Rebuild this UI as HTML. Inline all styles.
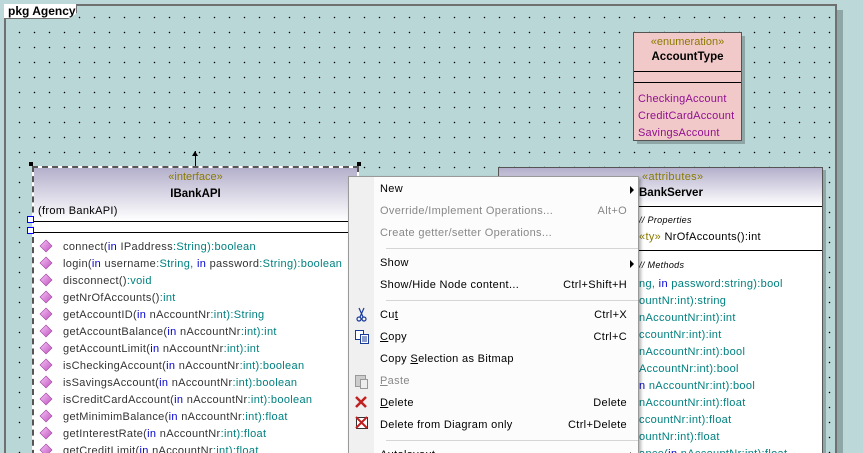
<!DOCTYPE html><html><head><style>
*{margin:0;padding:0;box-sizing:border-box}
html,body{width:863px;height:453px;overflow:hidden}
body{background:#bcd8d8;font-family:"Liberation Sans",sans-serif;font-size:11px;letter-spacing:.33px}
#w{position:relative;width:863px;height:453px;overflow:hidden}
.pkg{position:absolute;left:4px;top:4px;width:833px;height:460px;border:2px solid #707070;background-color:#bad7d7;background-image:radial-gradient(circle,#000 0.6px,transparent 0.9px);background-size:15px 15px;background-position:6px 4px}
.pshadow{position:absolute;left:837px;top:10px;width:6px;height:460px;background:#8fa6a6}
.tab{position:absolute;left:4px;top:4px;width:73px;height:15px;background:#fff;border-right:1px solid #707070;border-bottom:1px solid #707070;font-weight:bold;font-size:12px;letter-spacing:0;padding-left:4px;line-height:14px;clip-path:polygon(0 0,100% 0,100% 60%,88% 100%,0 100%)}
.abs{position:absolute}
.box{position:absolute;background:#fff}
.st{color:#8a7a00;text-align:center}
.nm{font-weight:bold;text-align:center;font-size:11.5px;letter-spacing:0}
.k{color:#0000d0}.t{color:#008080}
.menu{position:absolute;left:348px;top:176px;width:291px;height:290px;background:#fcfcfc;border:1px solid #999;box-shadow:2px 2px 3px rgba(0,0,0,.3)}
.gut{position:absolute;left:0;top:0;width:25px;height:100%;background:#f0f0f0}
.mi{position:absolute;left:31px;white-space:nowrap;font-size:11px;color:#000}
.sc{position:absolute;right:11px;white-space:nowrap;font-size:11px}
.dis{color:#888}
.sep{position:absolute;left:37px;right:0;height:1px;background:#d5d5d5}
.arr{position:absolute;right:4px;width:0;height:0;border-top:4px solid transparent;border-bottom:4px solid transparent;border-left:4px solid #000}
u{text-decoration:underline}
</style></head><body><div id="w">
<div class="pkg"></div><div class="pshadow"></div>
<div class="tab">pkg Agency</div>

<div class="abs" style="left:637px;top:36px;width:108px;height:108px;background:#8fa6a6"></div>
<div class="box" style="left:633px;top:32px;width:109px;height:109px;background:#f2c9c9;border:1px solid #555">
<div class="st" style="margin-top:3px;font-size:11px;letter-spacing:0">«enumeration»</div>
<div class="nm" style="margin-top:3px">AccountType</div>
<div class="abs" style="left:0;right:0;top:38px;height:1px;background:#000"></div>
<div class="abs" style="left:0;right:0;top:49px;height:1px;background:#000"></div>
<div class="abs" style="left:4px;top:58px;color:#901090;line-height:17px;letter-spacing:.2px">CheckingAccount<br>CreditCardAccount<br>SavingsAccount</div>
</div>

<div class="abs" style="left:822px;top:170px;width:4px;height:300px;background:#8fa6a6"></div>
<div class="box" style="left:498px;top:167px;width:325px;height:300px;border:1px solid #555">
<div class="abs" style="left:0;right:0;top:0;height:38px;background:linear-gradient(#b4b0cc,#fff)"></div>
<div class="abs" style="left:0;right:0;top:38px;height:1px;background:#000"></div>
<div class="abs" style="left:0;right:0;top:82px;height:1px;background:#000"></div>
<div class="abs" style="left:143px;top:3px"><span style="color:#8a7a00">«attributes»</span></div>
<div class="abs nm" style="left:140px;top:19px">BankServer</div>
<div class="abs" style="left:140px;top:47px;font-style:italic;font-size:9px">// Properties</div>
<div class="abs" style="left:140px;top:63px"><span style="color:#8a7a00">«ty»</span> NrOfAccounts():int</div>
<div class="abs" style="left:140px;top:92px;font-style:italic;font-size:9px">// Methods</div>
<div class="abs t" style="left:140px;top:108px;line-height:17px;white-space:nowrap">ng, <span class="k">in</span> password:string):bool<br>ountNr:int):string<br>nAccountNr:int):int<br>ccountNr:int):int<br>nAccountNr:int):bool<br>AccountNr:int):bool<br><span class="k">n</span> nAccountNr:int):bool<br>nAccountNr:int):float<br>ccountNr:int):float<br>ountNr:int):float<br>ance(<span class="k">in</span> nAccountNr:int):float</div>
</div>

<div class="abs" style="left:195px;top:151px;width:1px;height:16px;background:#000"></div>
<div class="abs" style="left:192px;top:151px;width:0;height:0;border-left:3px solid transparent;border-right:3px solid transparent;border-bottom:5px solid #000"></div>
<div class="box" style="left:32px;top:166px;width:327px;height:300px;border:2px dashed #555">
<div class="abs" style="left:0;right:0;top:0;height:53px;background:linear-gradient(#b4b0cc,#fff)"></div>
<div class="abs" style="left:0;right:0;top:53px;height:1px;background:#000"></div>
<div class="abs" style="left:0;right:0;top:64px;height:1px;background:#000"></div>
<div class="abs st" style="left:0;right:0;top:3px;letter-spacing:0">«interface»</div>
<div class="abs nm" style="left:0;right:0;top:20px">IBankAPI</div>
<div class="abs" style="left:4px;top:37px">(from BankAPI)</div>
</div>
<div class="abs" style="left:27px;top:216px;width:7px;height:7px;border:1px solid #00f;background:#fff"></div>
<div class="abs" style="left:27px;top:227px;width:7px;height:7px;border:1px solid #00f;background:#fff"></div>
<div class="abs" style="left:29px;top:162px;width:4px;height:4px;background:#000"></div>
<div class="abs" style="left:357px;top:162px;width:4px;height:4px;background:#000"></div>
<div class="abs" style="left:34px;top:238px;width:320px;height:215px;font-size:11px">
<svg style="position:absolute;left:5px;top:0" width="14" height="215">
<defs><linearGradient id="g" x1="0" y1="0" x2="1" y2="1"><stop offset="0" stop-color="#f6c8f6"/><stop offset="1" stop-color="#c050c0"/></linearGradient></defs>
<g fill="url(#g)" stroke="#a040a0" stroke-width="0.6">
<path d="M7 2L13 8L7 14L1 8Z"/><path d="M7 19L13 25L7 31L1 25Z"/><path d="M7 36L13 42L7 48L1 42Z"/><path d="M7 53L13 59L7 65L1 59Z"/><path d="M7 70L13 76L7 82L1 76Z"/><path d="M7 87L13 93L7 99L1 93Z"/><path d="M7 104L13 110L7 116L1 110Z"/><path d="M7 121L13 127L7 133L1 127Z"/><path d="M7 138L13 144L7 150L1 144Z"/><path d="M7 155L13 161L7 167L1 161Z"/><path d="M7 172L13 178L7 184L1 178Z"/><path d="M7 189L13 195L7 201L1 195Z"/><path d="M7 206L13 212L7 218L1 212Z"/></g></svg>
<div class="abs" style="left:29px;top:1px;line-height:17px;white-space:nowrap;color:#333">
connect(<span class="k">in</span> IPaddress<span class="t">:String):boolean</span><br>
login(<span class="k">in</span> username<span class="t">:String, </span><span class="k">in</span> password<span class="t">:String):boolean</span><br>
disconnect()<span class="t">:void</span><br>
getNrOfAccounts()<span class="t">:int</span><br>
getAccountID(<span class="k">in</span> nAccountNr<span class="t">:int):String</span><br>
getAccountBalance(<span class="k">in</span> nAccountNr<span class="t">:int):int</span><br>
getAccountLimit(<span class="k">in</span> nAccountNr<span class="t">:int):int</span><br>
isCheckingAccount(<span class="k">in</span> nAccountNr<span class="t">:int):boolean</span><br>
isSavingsAccount(<span class="k">in</span> nAccountNr<span class="t">:int):boolean</span><br>
isCreditCardAccount(<span class="k">in</span> nAccountNr<span class="t">:int):boolean</span><br>
getMinimimBalance(<span class="k">in</span> nAccountNr<span class="t">:int):float</span><br>
getInterestRate(<span class="k">in</span> nAccountNr<span class="t">:int):float</span><br>
getCreditLimit(<span class="k">in</span> nAccountNr<span class="t">:int):float</span></div>
</div>

<div class="menu"><div class="gut"></div>
<div class="mi" style="top:6px">New</div><div class="arr" style="top:9px"></div>
<div class="mi dis" style="top:28px">Override/Implement Operations...</div><div class="sc dis" style="top:28px">Alt+O</div>
<div class="mi dis" style="top:50px">Create getter/setter Operations...</div>
<div class="sep" style="top:71px"></div>
<div class="mi" style="top:80px">Show</div><div class="arr" style="top:83px"></div>
<div class="mi" style="top:102px">Show/Hide Node content...</div><div class="sc" style="top:102px">Ctrl+Shift+H</div>
<div class="sep" style="top:123px"></div>
<div class="mi" style="top:132px">Cu<u>t</u></div><div class="sc" style="top:132px">Ctrl+X</div>
<div class="mi" style="top:154px"><u>C</u>opy</div><div class="sc" style="top:154px">Ctrl+C</div>
<div class="mi" style="top:176px">Copy <u>S</u>election as Bitmap</div>
<div class="mi dis" style="top:198px"><u>P</u>aste</div>
<div class="mi" style="top:220px"><u>D</u>elete</div><div class="sc" style="top:220px">Delete</div>
<div class="mi" style="top:242px">Delete from Diagram only</div><div class="sc" style="top:242px">Ctrl+Delete</div>
<div class="sep" style="top:263px"></div>
<div class="mi" style="top:272px">Autolayout</div><div class="arr" style="top:275px"></div>
<svg class="abs" style="left:4px;top:130px" width="18" height="130">
<g stroke="#1a3a9a" fill="none" stroke-width="1.2"><path d="M6 1L10 10M11 1L7 10"/><circle cx="6" cy="12" r="2"/><circle cx="11" cy="12" r="2"/></g>
<g stroke="#1a3a9a" fill="#fff"><rect x="2.5" y="23.5" width="8" height="9"/><rect x="7.5" y="27.5" width="8" height="9"/><path d="M9 30H14M9 32H14M9 34H14"/></g>
<g stroke="#999" fill="#ccc"><rect x="2.5" y="68.5" width="10" height="11"/><rect x="7.5" y="72.5" width="7" height="9" fill="#eee"/></g>
<path d="M3 90L13 100M13 90L3 100" stroke="#c02020" stroke-width="2.5"/>
<rect x="3.5" y="110.5" width="11" height="11" fill="#fff" stroke="#333"/><path d="M3 110L14 121M14 110L3 121" stroke="#c02020" stroke-width="2"/>
</svg>
</div>
</div></body></html>
